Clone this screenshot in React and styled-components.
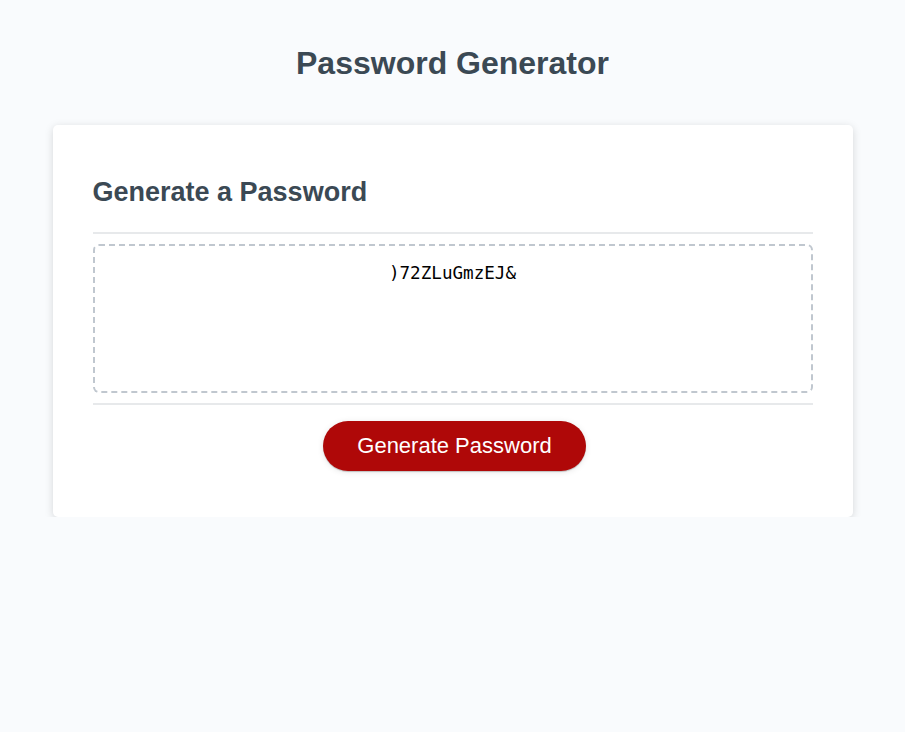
import React from "react";
import styled, { createGlobalStyle } from "styled-components";

const GlobalStyle = createGlobalStyle`
  html, body {
    margin: 0;
    padding: 0;
  }
  body {
    margin: 8px;
    font-family: "Liberation Sans", Arial, sans-serif;
    background-color: #f9fbfd;
  }
  *, *::before, *::after {
    box-sizing: border-box;
  }
`;

const Wrapper = styled.div`
  padding: 0 20px;
`;

const Header = styled.header`
  text-align: center;
  padding: 0 20px 20px;
  color: hsl(206, 17%, 28%);
`;

const Title = styled.h1`
  font-size: 32px;
  font-weight: bold;
  line-height: 37px;
  margin: 0;
  padding-top: 37px;
  padding-bottom: 23px;
`;

const Card = styled.section`
  background-color: #fff;
  border-radius: 5px;
  box-shadow: rgba(0, 0, 0, 0.15) 0px 2px 8px 0px;
  color: hsl(206, 17%, 28%);
  font-size: 18px;
  margin: 0 auto;
  max-width: 800px;
  padding: 30px 40px;
`;

const Divider = styled.div`
  width: 100%;
  height: 2px;
  background: #e7e9eb;
`;

const CardHeader = styled.div``;

const Heading = styled.h2`
  font-size: 27px;
  font-weight: bold;
  line-height: 31px;
  margin: 22px 0 24px;
`;

const CardBody = styled.div`
  min-height: 100px;
`;

const PasswordBox = styled.textarea`
  appearance: none;
  display: block;
  width: 100%;
  height: 149px;
  margin: 10px 0;
  padding: 16px 15px 84px;
  font-family: "DejaVu Sans Mono", "Liberation Mono", monospace;
  font-size: 17.6px;
  line-height: 22.5px;
  color: #000;
  text-align: center;
  border: 2px dashed #c0c7cf;
  border-radius: 6px;
  resize: none;
  overflow: hidden;
  background: #fff;
  outline: none;
`;

const CardFooter = styled.div`
  text-align: center;
`;

const Button = styled.button`
  border: none;
  background-color: hsl(360, 91%, 36%);
  border-radius: 25px;
  box-shadow: rgba(0, 0, 0, 0.1) 0px 1px 6px 0px, rgba(0, 0, 0, 0.2) 0px 1px 1px 0px;
  color: #fff;
  display: inline-block;
  font-family: "Liberation Sans", Arial, sans-serif;
  font-size: 22px;
  line-height: 22px;
  margin: 16px 16px 16px 20px;
  padding: 14px 34px;
  text-align: center;
  cursor: pointer;
`;

export default function App() {
  return (
    <>
      <GlobalStyle />
      <Wrapper>
        <Header>
          <Title>Password Generator</Title>
        </Header>
        <Card>
          <CardHeader>
            <Heading>Generate a Password</Heading>
            <Divider />
          </CardHeader>
          <CardBody>
            <PasswordBox
              readOnly
              value=")72ZLuGmzEJ&"
              placeholder="Your Secure Password"
              aria-label="Generated Password"
            />
          </CardBody>
          <CardFooter>
            <Divider />
            <Button>Generate Password</Button>
          </CardFooter>
        </Card>
      </Wrapper>
    </>
  );
}
